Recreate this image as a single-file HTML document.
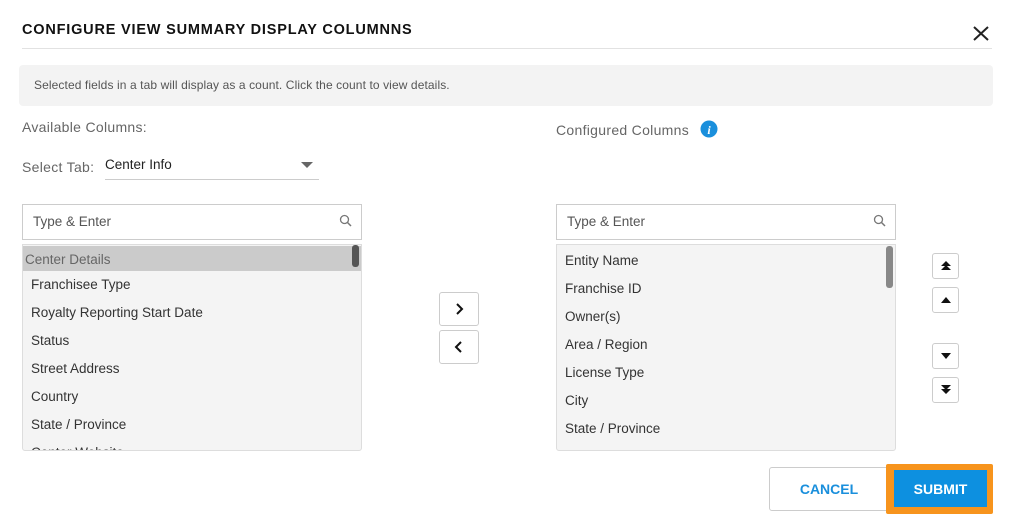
<!DOCTYPE html>
<html><head><style>
*{box-sizing:border-box;margin:0;padding:0}
body{width:1014px;height:525px;background:#fff;font-family:"Liberation Sans",sans-serif;position:relative;overflow:hidden;color:#333}
.a{position:absolute}
.title{left:22px;top:22px;font-size:14.5px;font-weight:bold;letter-spacing:0.8px;color:#111}
.hr{left:22px;top:48px;width:970px;height:1px;background:#e2e2e2}
.info{left:19px;top:65px;width:974px;height:41px;background:#f3f3f3;border-radius:4px;font-size:12px;color:#555;padding:13px 0 0 15px;letter-spacing:0.1px}
.lbl{font-size:14px;color:#666;letter-spacing:0.3px}
.search{background:#fff;border:1px solid #ccc;font-size:13.5px;color:#555;padding:9px 0 0 10px;height:36px}
.list{background:#f4f4f4;border:1px solid #ddd;overflow:hidden;border-radius:0 0 3px 3px}
.row{position:absolute;left:8px;font-size:13.5px;color:#333}
.btn{border:1px solid #ccc;border-radius:3px;background:#fff;display:flex;align-items:center;justify-content:center}
.sb{width:27px;height:26px}
</style></head><body>
<div class="a title">CONFIGURE VIEW SUMMARY DISPLAY COLUMNNS</div>
<svg class="a" style="left:972px;top:25px" width="18" height="17"><path d="M2 2L16 15M16 2L2 15" stroke="#222" stroke-width="2"/></svg>
<div class="a hr"></div>
<div class="a info">Selected fields in a tab will display as a count. Click the count to view details.</div>
<div class="a lbl" style="left:22px;top:119px">Available Columns:</div>
<div class="a lbl" style="left:22px;top:159px">Select Tab:</div>
<div class="a" style="left:105px;top:157px;width:214px;height:23px;border-bottom:1px solid #ccc;font-size:13.5px;color:#222">Center Info</div>
<svg class="a" style="left:301px;top:162px" width="12" height="7"><path d="M0 0H12L6 6Z" fill="#666"/></svg>
<div class="a lbl" style="left:556px;top:122px">Configured Columns</div>
<svg class="a" style="left:700px;top:120px" width="18" height="18"><circle cx="9" cy="9" r="8.5" fill="#1a8fdc"/><text x="9" y="14" font-size="12" font-style="italic" font-weight="bold" fill="#fff" text-anchor="middle" font-family="Liberation Serif">i</text></svg>

<div class="a search" style="left:22px;top:204px;width:340px">Type &amp; Enter</div>
<svg class="a" style="left:339px;top:214px" width="14" height="14"><circle cx="5.5" cy="5.5" r="4" stroke="#777" stroke-width="1.3" fill="none"/><path d="M8.5 8.5L12 12" stroke="#777" stroke-width="1.5"/></svg>
<div class="a list" style="left:22px;top:244px;width:340px;height:207px">
<div class="a" style="left:0;top:1px;width:338px;height:25px;background:#cbcbcb"></div>
<div class="row" style="left:2px;top:7px;color:#666">Center Details</div>
<div class="row" style="top:32px">Franchisee Type</div>
<div class="row" style="top:60px">Royalty Reporting Start Date</div>
<div class="row" style="top:88px">Status</div>
<div class="row" style="top:116px">Street Address</div>
<div class="row" style="top:144px">Country</div>
<div class="row" style="top:172px">State / Province</div>
<div class="row" style="top:200px">Center Website</div>
<div class="a" style="left:329px;top:0px;width:7px;height:22px;background:#555;border-radius:3px"></div>
</div>

<div class="a btn" style="left:439px;top:292px;width:40px;height:34px"><svg width="10" height="12"><path d="M3 1L8 6L3 11" stroke="#111" stroke-width="2" fill="none"/></svg></div>
<div class="a btn" style="left:439px;top:330px;width:40px;height:34px"><svg width="10" height="12"><path d="M7 1L2 6L7 11" stroke="#111" stroke-width="2" fill="none"/></svg></div>

<div class="a search" style="left:556px;top:204px;width:340px">Type &amp; Enter</div>
<svg class="a" style="left:873px;top:214px" width="14" height="14"><circle cx="5.5" cy="5.5" r="4" stroke="#777" stroke-width="1.3" fill="none"/><path d="M8.5 8.5L12 12" stroke="#777" stroke-width="1.5"/></svg>
<div class="a list" style="left:556px;top:244px;width:340px;height:207px">
<div class="row" style="top:8px">Entity Name</div>
<div class="row" style="top:36px">Franchise ID</div>
<div class="row" style="top:64px">Owner(s)</div>
<div class="row" style="top:92px">Area / Region</div>
<div class="row" style="top:120px">License Type</div>
<div class="row" style="top:148px">City</div>
<div class="row" style="top:176px">State / Province</div>
<div class="a" style="left:329px;top:1px;width:7px;height:42px;background:#888;border-radius:3px"></div>
</div>

<div class="a btn sb" style="left:932px;top:253px"><svg width="10" height="10"><path d="M5 0L10 5H0Z M5 4L10 9H0Z" fill="#111"/></svg></div>
<div class="a btn sb" style="left:932px;top:287px"><svg width="10" height="7"><path d="M5 0L10 6H0Z" fill="#111"/></svg></div>
<div class="a btn sb" style="left:932px;top:343px"><svg width="10" height="7"><path d="M0 0H10L5 6Z" fill="#111"/></svg></div>
<div class="a btn sb" style="left:932px;top:377px"><svg width="10" height="10"><path d="M0 0H10L5 5Z M0 4H10L5 9Z" fill="#111"/></svg></div>

<div class="a btn" style="left:769px;top:467px;width:120px;height:44px;color:#1a8fdc;font-weight:bold;font-size:14px">CANCEL</div>
<div class="a" style="left:886px;top:464px;width:107px;height:50px;background:#f7941d;border-radius:2px"></div>
<div class="a" style="left:894px;top:470px;width:93px;height:37px;background:#0d90e0;color:#fff;font-weight:bold;font-size:14px;display:flex;align-items:center;justify-content:center">SUBMIT</div>
</body></html>
